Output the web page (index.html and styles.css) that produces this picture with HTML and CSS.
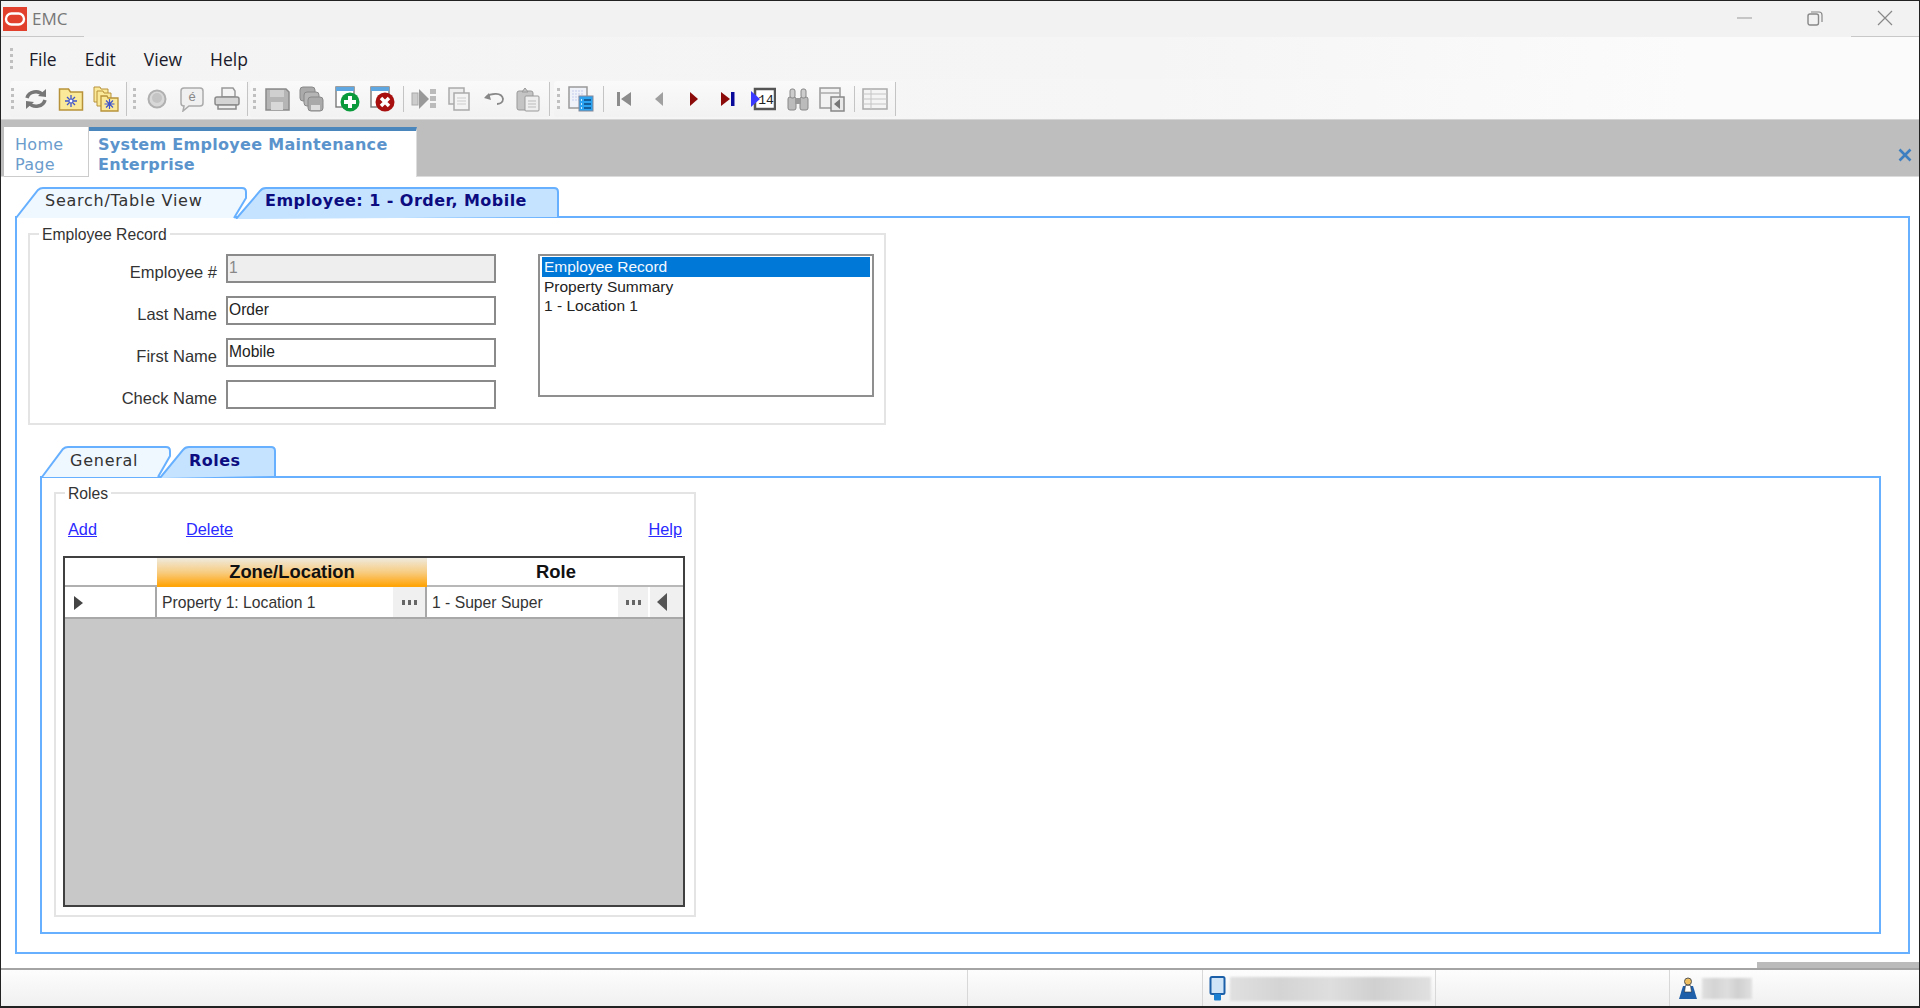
FILE: index.html
```html
<!DOCTYPE html>
<html lang="en">
<head>
<meta charset="utf-8">
<title>EMC</title>
<link rel="stylesheet" href="styles.css">
</head>
<body>
<div class="win">
  <header class="titlebar">
    <svg class="logo" viewBox="0 0 24 24" width="24" height="24"><rect width="24" height="24" fill="#e0402c"/><rect x="3" y="6.5" width="18" height="11" rx="5.5" fill="none" stroke="#fff" stroke-width="2.4"/></svg>
    <span class="apptitle">EMC</span>
    <div class="winctl">
      <svg width="16" height="16" viewBox="0 0 16 16"><path d="M0 8h15" stroke="#999" fill="none"/></svg>
      <svg width="16" height="16" viewBox="0 0 16 16"><rect x="1" y="4" width="10.500" height="11" rx="2" fill="none" stroke="#888" stroke-width="1.400"/><path d="M4 2h8a3 3 0 0 1 3 3v7" fill="none" stroke="#888" stroke-width="1.200"/></svg>
      <svg width="16" height="16" viewBox="0 0 16 16"><path d="M1 1l14 14M15 1L1 15" stroke="#888" stroke-width="1.200" fill="none"/></svg>
    </div>
  </header>

  <nav class="menubar">
    <i class="grip"></i>
    <span class="menu">File</span><span class="menu">Edit</span><span class="menu">View</span><span class="menu">Help</span>
  </nav>

  <div class="toolbar">
    <div class="tgroup first">
      <i class="grip"></i>
      <span class="slot"><svg viewBox="0 0 26 26" width="26" height="26"><path d="M4 12a9 8 0 0 1 16-3" fill="none" stroke="#777" stroke-width="3.500"/><path d="M15 10l8 1 0-8z" fill="#777"/><path d="M22 14a9 8 0 0 1-16 3" fill="none" stroke="#777" stroke-width="3.500"/><path d="M11 16l-8-1 0 8z" fill="#777"/></svg></span>
      <span class="slot"><svg viewBox="0 0 26 26" width="26" height="26"><path d="M1.500 24V3h9l2 3h12v18z" fill="#fbe99a" stroke="#b8923a" stroke-width="1.500"/><path d="M13 9v12M7 15h12M9 11l8 8M17 11l-8 8" stroke="#3f55cc" stroke-width="1.300"/><circle cx="13" cy="15" r="2" fill="#fff" stroke="#3f55cc"/></svg></span>
      <span class="slot"><svg viewBox="0 0 26 26" width="26" height="26"><path d="M1 16V1h6l1 2h7v13z" fill="#fbe99a" stroke="#b8923a"/><path d="M4 20V5h6l1 2h7v13z" fill="#fbe99a" stroke="#b8923a"/><path d="M8 25V10h6l1 2h10v13z" fill="#fbe99a" stroke="#b8923a" stroke-width="1.300"/><path d="M16.500 13v10M11.500 18h10M13 14.500l7 7M20 14.500l-7 7" stroke="#3f55cc" stroke-width="1.200"/></svg></span>
      <i class="sep"></i>
    </div>
    <div class="tgroup second">
      <i class="grip"></i>
      <span class="slot"><svg viewBox="0 0 26 26" width="26" height="26"><circle cx="13" cy="13" r="8.500" fill="#d8d8d8" stroke="#b0b0b0" stroke-width="2"/><circle cx="13" cy="12" r="5" fill="#c4c4c4"/></svg></span>
      <span class="slot"><svg viewBox="0 0 26 26" width="26" height="26"><path d="M5 2h16a3 3 0 0 1 3 3v12a3 3 0 0 1-3 3H10l-6 5 1-5a3 3 0 0 1-3-3V5a3 3 0 0 1 3-3z" fill="#f0f0f0" stroke="#aaa" stroke-width="1.500"/><text x="13" y="15" class="tiny">é</text></svg></span>
      <span class="slot"><svg viewBox="0 0 26 26" width="26" height="26"><path d="M8 11V2h11l2 3v6z" fill="#f4f4f4" stroke="#999" stroke-width="1.500"/><rect x="1" y="11" width="24" height="8" rx="2" fill="#d4d4d4" stroke="#8a8a8a" stroke-width="1.500"/><rect x="4" y="19" width="18" height="4" fill="#eee" stroke="#8a8a8a" stroke-width="1.500"/></svg></span>
      <i class="sep"></i>
    </div>
    <div class="tgroup">
      <i class="grip"></i>
      <span class="slot"><svg viewBox="0 0 26 26" width="26" height="26"><path d="M2 3h20l3 3v18H2z" fill="#b5b5b5" stroke="#8a8a8a" stroke-width="1.500"/><rect x="6" y="4" width="14" height="7" fill="#cfcfcf"/><rect x="7" y="16" width="12" height="8" fill="#d8d8d8"/></svg></span>
      <span class="slot"><svg viewBox="0 0 26 26" width="26" height="26"><rect x="1" y="1" width="15" height="14" rx="3" fill="#aaa" stroke="#888"/><rect x="5" y="6" width="15" height="14" rx="3" fill="#b5b5b5" stroke="#888"/><rect x="9" y="11" width="15" height="14" rx="3" fill="#aaa" stroke="#888"/><rect x="12" y="19" width="9" height="5" fill="#ddd"/></svg></span>
      <span class="slot"><svg viewBox="0 0 26 26" width="26" height="26"><rect x="2" y="1" width="18" height="20" fill="#fff" stroke="#7a7a7a" stroke-width="1.400"/><rect x="2" y="1" width="18" height="4" fill="#5fa7e0"/><circle cx="16" cy="16" r="9.500" fill="#0a9a3c"/><path d="M16 10v12M10 16h12" stroke="#fff" stroke-width="4"/></svg></span>
      <span class="slot"><svg viewBox="0 0 26 26" width="26" height="26"><rect x="2" y="1" width="18" height="20" fill="#fff" stroke="#7a7a7a" stroke-width="1.400"/><rect x="2" y="1" width="18" height="4" fill="#5fa7e0"/><circle cx="16" cy="16" r="9.500" fill="#a81010"/><path d="M12 12l8 8M20 12l-8 8" stroke="#fff" stroke-width="3.500"/></svg></span>
      <i class="sep short"></i>
      <span class="slot"><svg viewBox="0 0 26 26" width="26" height="26"><rect x="1" y="7" width="6" height="12" fill="#ccc" stroke="#aaa"/><path d="M8 3l10 10-10 10z" fill="#999"/><rect x="19" y="3" width="6" height="5" fill="#bbb"/><rect x="19" y="10" width="6" height="5" fill="#bbb"/><rect x="19" y="17" width="6" height="5" fill="#bbb"/></svg></span>
      <span class="slot"><svg viewBox="0 0 26 26" width="26" height="26"><rect x="3" y="2" width="15" height="16" fill="#eee" stroke="#aaa" stroke-width="1.500"/><rect x="8" y="7" width="15" height="17" fill="#f4f4f4" stroke="#aaa" stroke-width="1.500"/><path d="M11 12h9M11 15h9M11 18h9" stroke="#ccc"/></svg></span>
      <span class="slot"><svg viewBox="0 0 26 26" width="26" height="26"><path d="M8 7l-5 5 7 2z" fill="#888"/><path d="M5 11c5-4 16-5 17 2 0 4-4 5-6 5" fill="none" stroke="#888" stroke-width="1.800"/></svg></span>
      <span class="slot"><svg viewBox="0 0 26 26" width="26" height="26"><rect x="2" y="5" width="16" height="19" rx="2" fill="#c4c4c4" stroke="#999"/><path d="M7 6l3-4 3 4z" fill="#c4c4c4" stroke="#999"/><rect x="10" y="10" width="14" height="15" rx="1" fill="#eee" stroke="#999"/><path d="M13 15h8M13 18h8M13 21h8" stroke="#bbb"/></svg></span>
      <i class="sep"></i>
    </div>
    <div class="tgroup">
      <i class="grip"></i>
      <span class="slot"><svg viewBox="0 0 26 26" width="26" height="26"><rect x="1" y="1" width="18" height="21" fill="#f0f2fa" stroke="#999" stroke-width="1.500"/><path d="M4 5h12M4 8h12M4 11h12M4 14h12" stroke="#c4ccec" stroke-dasharray="2 1"/><rect x="11" y="10" width="14" height="15" fill="#2ba3f0" stroke="#889"/><path d="M16 14h7M16 18h7M16 22h7" stroke="#0a4a80" stroke-width="1.500"/><path d="M13 14h1M13 18h1M13 22h1" stroke="#fff" stroke-width="1.500"/></svg></span>
      <i class="sep short"></i>
      <span class="slot"><svg viewBox="0 0 26 26" width="26" height="26"><path d="M6 6h3v14H6zM20 6v14l-10-7z" fill="#8c8c8c"/></svg></span>
      <span class="slot"><svg viewBox="0 0 26 26" width="26" height="26"><path d="M17 6v14l-8-7z" fill="#a0a0a0"/></svg></span>
      <span class="slot"><svg viewBox="0 0 26 26" width="26" height="26"><path d="M9 6v14l8-7z" fill="#8b0a0a"/></svg></span>
      <span class="slot"><svg viewBox="0 0 26 26" width="26" height="26"><path d="M6 6v14l9-7z" fill="#8b0a0a"/><path d="M16 6h3.500v14H16z" fill="#0a0a9a"/></svg></span>
      <span class="slot"><svg viewBox="0 0 26 26" width="26" height="26"><rect x="5" y="3" width="20" height="20" fill="#fff" stroke="#555" stroke-width="2.500"/><text x="16" y="18" class="cal">14</text><path d="M1 5l9 8-9 8z" fill="#3a3aff"/></svg></span>
      <span class="slot"><svg viewBox="0 0 26 26" width="26" height="26"><rect x="3" y="11" width="8" height="13" rx="2" fill="#bbb" stroke="#888"/><rect x="15" y="11" width="8" height="13" rx="2" fill="#bbb" stroke="#888"/><rect x="5" y="3" width="5" height="9" rx="2" fill="#ccc" stroke="#888"/><rect x="16" y="3" width="5" height="9" rx="2" fill="#ccc" stroke="#888"/><rect x="10" y="12" width="6" height="6" fill="#999"/></svg></span>
      <span class="slot"><svg viewBox="0 0 26 26" width="26" height="26"><rect x="1" y="2" width="20" height="20" fill="#f2f2f2" stroke="#999" stroke-width="1.500"/><path d="M1 7h20" stroke="#aaa" stroke-width="1.500"/><rect x="12" y="11" width="13" height="14" fill="#e8e8e8" stroke="#888" stroke-width="1.500"/><path d="M21 13v10l-6-5z" fill="#777"/></svg></span>
      <i class="sep short"></i>
      <span class="slot"><svg viewBox="0 0 26 26" width="26" height="26"><rect x="1" y="3" width="24" height="20" fill="#f4f4f4" stroke="#aaa" stroke-width="1.500"/><path d="M1 8h24M1 13h24M1 18h24M9 3v20" stroke="#c4c4c4"/></svg></span>
      <i class="sep"></i>
    </div>
  </div>

  <div class="docstrip">
    <div class="doctab home">Home<br>Page</div>
    <div class="doctab current">System Employee Maintenance<br>Enterprise</div>
    <svg class="docclose" width="14" height="14" viewBox="0 0 14 14"><path d="M1.500 1.500l11 11M12.500 1.500l-11 11" stroke="#3d7fc0" stroke-width="2.600" fill="none"/></svg>
  </div>

  <main class="content">
    <div class="tabs outer">
      <div class="tab t-search">
        <svg class="tabshape" width="232" height="32" viewBox="0 0 232 32"><path d="M1 31L23 3Q25 1 28 1H227Q231 1 231 5V11L219 31" fill="#eff7ff" stroke="#66b0ff" stroke-width="2"/></svg>
        <span class="tablabel">Search/Table View</span>
      </div>
      <div class="tab t-emp active">
        <svg class="tabshape" width="324" height="32" viewBox="0 0 324 32"><path d="M1 32L25 4Q27 1 31 1H319Q323 1 323 5V30" fill="#c5e3ff" stroke="#66b0ff" stroke-width="2"/></svg>
        <span class="tablabel">Employee: 1 - Order, Mobile</span>
      </div>
    </div>
    <section class="panel outerpanel">
      <div class="group record">
        <span class="legend">Employee Record</span>
        <div class="form">
          <span class="lab">Employee #</span><div class="field off">1</div>
          <span class="lab">Last Name</span><div class="field">Order</div>
          <span class="lab">First Name</span><div class="field">Mobile</div>
          <span class="lab">Check Name</span><div class="field"></div>
        </div>
        <div class="listbox">
          <div class="opt sel">Employee Record</div>
          <div class="opt">Property Summary</div>
          <div class="opt">1 - Location 1</div>
        </div>
      </div>

      <div class="tabs inner">
        <div class="tab t-gen">
          <svg class="tabshape" width="130" height="32" viewBox="0 0 130 32"><path d="M1 31L22 3Q24 1 27 1H125Q129 1 129 5V10L117 31" fill="#eff7ff" stroke="#66b0ff" stroke-width="2"/></svg>
          <span class="tablabel">General</span>
        </div>
        <div class="tab t-roles active">
          <svg class="tabshape" width="117" height="32" viewBox="0 0 117 32"><path d="M1 32L24 4Q26 1 30 1H112Q116 1 116 5V30" fill="#c5e3ff" stroke="#66b0ff" stroke-width="2"/></svg>
          <span class="tablabel">Roles</span>
        </div>
      </div>
      <section class="panel innerpanel">
        <div class="group roles">
          <span class="legend">Roles</span>
          <div class="links">
            <a class="lnk add" href="#">Add</a>
            <a class="lnk del" href="#">Delete</a>
            <a class="lnk help" href="#">Help</a>
          </div>
          <div class="grid">
            <div class="hd corner"></div>
            <div class="hd sorted">Zone/Location</div>
            <div class="hd role">Role</div>
            <div class="rowhead"><svg width="9" height="14" viewBox="0 0 9 14"><path d="M0 0l9 7-9 7z" fill="#444"/></svg></div>
            <div class="cell"><span class="celltext">Property 1: Location 1</span><span class="dots"><svg width="15" height="5" viewBox="0 0 15 5"><path d="M0 0h3v5H0zM6 0h3v5H6zM12 0h3v5h-3z" fill="#666"/></svg></span></div>
            <div class="cell"><span class="celltext">1 - Super Super</span><span class="dots d2"><svg width="15" height="5" viewBox="0 0 15 5"><path d="M0 0h3v5H0zM6 0h3v5H6zM12 0h3v5h-3z" fill="#666"/></svg></span><span class="back"><svg width="12" height="18" viewBox="0 0 12 18"><path d="M11 0v18L1 9z" fill="#555"/></svg></span></div>
          </div>
        </div>
      </section>
    </section>
    <div class="hscroll"></div>
  </main>

  <footer class="status">
    <div class="scell s1"></div>
    <div class="scell s2"></div>
    <div class="scell s3">
      <svg width="17" height="25" viewBox="0 0 17 25"><rect x="1.500" y="1" width="14" height="17" rx="1.500" fill="#cfe4f7" stroke="#1a5fa8" stroke-width="2"/><rect x="5" y="18" width="7" height="6.500" rx="1" fill="#1a7fd0"/></svg>
      <span class="blur wide"></span>
    </div>
    <div class="scell s4"></div>
    <div class="scell s5">
      <svg width="20" height="23" viewBox="0 0 20 23"><circle cx="10" cy="4.500" r="3.500" fill="#f0c060" stroke="#555"/><path d="M5 9h10l4 13H1z" fill="#1f5ea8"/><path d="M7.500 8.500h5l1 6.500H6.500z" fill="#fff" stroke="#333" stroke-width=".6"/></svg>
      <span class="blur narrow"></span>
    </div>
  </footer>
</div>
</body>
</html>
```

FILE: styles.css
```css
* { box-sizing: border-box; }
html, body { margin: 0; padding: 0; height: 100%; overflow: hidden; }
body { font-family: "Liberation Sans", Arial, sans-serif; font-size: 16px; color: #222; background: #fff; }

.win { height: 1008px; display: flex; flex-direction: column; border: 1px solid #222; border-bottom-width: 2px; background: #fff; }

/* title bar */
.titlebar {
  height: 36px; flex: none; display: flex; align-items: center; padding: 0 0 1px 2px;
  background:
    linear-gradient(#c8c8c8, #c8c8c8) left bottom / 83px 1px no-repeat,
    linear-gradient(#c8c8c8, #c8c8c8) right bottom / 68px 1px no-repeat,
    #f2f2f2;
}
.logo { flex: none; }
.apptitle { margin-left: 5px; font-family: "Open Sans", sans-serif; font-size: 17px; color: #777; }
.winctl { margin-left: auto; display: flex; gap: 54px; padding: 0 26px 2px 0; align-items: center; }

/* menu */
.menubar {
  height: 42px; flex: none; display: flex; align-items: center; padding: 1px 0 0 9px;
  background: linear-gradient(90deg, #f4f4f4, #f5f5f5 60%, #fbfbfb 88%);
}
.grip { display: block; width: 3px; height: 22px; flex: none; background: repeating-linear-gradient(#c0c0c0 0 3px, transparent 3px 6px); }
.menu { font-family: "Open Sans", sans-serif; font-size: 17.5px; color: #1a1a2a; margin-right: 28px; }
.menubar .grip + .menu { margin-left: 16px; }

/* toolbar */
.toolbar {
  height: 40px; flex: none; display: flex; align-items: center; padding-left: 9px;
  background: linear-gradient(90deg, #f4f4f4, #f6f6f6 60%, #fbfbfb 88%);
}
.tgroup { display: flex; align-items: center; height: 36px; padding-left: 1px; background: linear-gradient(#fafafa, #f2f2f2); border-radius: 3px; margin-right: 4.5px; }
.tgroup .grip { margin-right: 4px; }
.tgroup.first { margin-right: 3px; }
.tgroup.second { margin-right: 2px; }
.tgroup.first .grip { margin-right: 5px; }
.tgroup:not(.first) .grip { margin-left: 2px; margin-right: 4px; }
.slot { width: 34.7px; height: 28px; display: flex; align-items: center; justify-content: center; flex: none; }
.sep { display: block; width: 1px; height: 34px; background: #c4c4c4; margin-left: 3px; }
.sep.short { height: 26px; margin: 0 3px 0 4px; }
.tiny { font: 13px "Liberation Sans", sans-serif; fill: #888; text-anchor: middle; }
.cal { font: 13px "Liberation Mono", monospace; fill: #222; text-anchor: middle; }

/* document tabs */
.docstrip {
  height: 58px; flex: none; position: relative; display: flex; align-items: flex-end; padding-left: 3px;
  background: #bebebe; border-top: 1px solid #d4d4d4; border-bottom: 1px solid #dcdcdc;
  font-family: "DejaVu Sans", sans-serif; font-size: 16px; line-height: 20px;
}
.doctab { height: 50px; margin-bottom: -1px; background: #fff; flex: none; }
.doctab.home { width: 85px; padding: 8px 0 0 11px; color: #6b9ccc; border-right: 1px solid #ccc; border-bottom: 1px solid #ccc; letter-spacing: .3px; }
.doctab.current { width: 328px; padding: 4px 0 0 9px; border-top: 4px solid #4a86bb; color: #5b94cc; font-weight: bold; border-right: 1px solid #ddd; letter-spacing: .3px; }
.docclose { position: absolute; right: 7px; top: 28px; }

/* content */
.content { flex: 1; min-height: 0; position: relative; display: flex; flex-direction: column; padding: 10px 9px 14px 14px; }
.hscroll { position: absolute; right: 0; bottom: 0; width: 162px; height: 6px; background: #bbb; }

.tabs { display: flex; height: 31px; flex: none; position: relative; z-index: 1; margin-bottom: -2px; font-family: "DejaVu Sans", sans-serif; font-size: 16px; color: #333; letter-spacing: .75px; }
.tab { position: relative; height: 31px; flex: none; display: flex; align-items: center; padding-bottom: 4px; }
.tabshape { position: absolute; left: 0; top: 0; }
.tablabel { position: relative; white-space: nowrap; }
.tab.active .tablabel { font-weight: bold; color: #0c0c80; letter-spacing: .45px; }
.t-search { width: 232px; padding-left: 30px; }
.t-emp { width: 324px; margin-left: -12px; padding-left: 30px; }
.t-gen { width: 130px; padding-left: 29px; }
.t-roles { width: 117px; margin-left: -12px; padding-left: 30px; }
.inner .tab { padding-bottom: 3px; }
.inner { margin: 21px 0 -1px 13px; }

.panel { border: 2px solid #66b0ff; display: flex; flex-direction: column; min-height: 0; }
.outerpanel { flex: 1; padding: 15px 27px 18px 11px; }
.innerpanel { flex: 1; margin-left: 12px; padding: 14px 0 15px 12px; }

/* group boxes */
.group { position: relative; border: 2px solid #e4e4e4; flex: none; }
.legend { position: absolute; left: 9px; top: -9px; background: #fff; padding: 0 3px; line-height: 18px; font-size: 15.7px; color: #333; }
.record { width: 858px; height: 192px; display: flex; padding-top: 19px; }
.form { width: 466px; display: grid; grid-template-columns: 188px 270px; column-gap: 8px; grid-auto-rows: 29px; row-gap: 13px; align-content: start; flex: none; }
.lab { text-align: right; padding: 9px 1px 0 0; line-height: 18px; font-size: 16.5px; color: #333; }
.field { border: 2px solid #8a8a8a; background: #fff; padding: 3px 0 0 1px; line-height: 18px; font-size: 15.6px; color: #222; }
.field.off { background: #eee; color: #888; }
.listbox { margin-left: 42px; width: 336px; height: 143px; border: 2px solid #8f8f8f; padding: 1px 2px; background: #fff; }
.opt { height: 19.6px; line-height: 19.6px; padding-left: 2px; font-size: 15.5px; color: #222; }
.opt.sel { background: #0078d7; color: #f4f8ff; }

.roles { width: 642px; height: 425px; padding: 25px 9px 8px 7px; display: flex; flex-direction: column; }
.links { display: flex; height: 20px; line-height: 20px; flex: none; font-size: 16.3px; }
.lnk { color: #2a2aff; text-decoration: underline; }
.add { margin-left: 5px; }
.del { margin-left: 89px; }
.help { margin-left: auto; margin-right: 3px; }

/* data grid */
.grid { margin-top: 17px; flex: 1; border: 2px solid #404040; background: #c8c8c8; display: grid; grid-template-columns: 92px 270px 1fr; grid-template-rows: 29px 32px; align-content: start; }
.hd { background: #fff; display: flex; align-items: center; justify-content: center; padding-bottom: 2px; font-weight: bold; font-size: 18.4px; color: #111; }
.hd.corner { box-shadow: inset 0 -2px 0 #b0b0b0, inset 0 2px 0 #fff; }
.hd.sorted { background: linear-gradient(#efeade, #f8cc80 50%, #ffa50a 95%); }
.hd.role { box-shadow: inset 0 -2px 0 #b8b8b8; padding-left: 2px; }
.rowhead { background: #fff; border-bottom: 2px solid #a8a8a8; border-right: 2px solid #a8a8a8; display: flex; align-items: center; padding: 2px 0 0 9px; }
.cell { background: #fff; border-bottom: 2px solid #a8a8a8; display: flex; align-items: stretch; }
.cell:nth-child(5) { border-right: 2px solid #a8a8a8; }
.celltext { flex: 1; padding-left: 5px; line-height: 32px; font-size: 15.7px; color: #333; white-space: nowrap; }
.dots { width: 32px; background: #f0f0f0; display: flex; align-items: center; justify-content: center; }
.d2 { width: 30px; }
.back { width: 33px; margin-left: 2px; padding-right: 9px; background: #f0f0f0; display: flex; align-items: center; justify-content: center; }

/* status bar */
.status { height: 38px; flex: none; display: flex; border-top: 2px solid #a4a4a4; background: linear-gradient(#fdfdfd, #f0f0f0); }
.scell { border-right: 1px solid #d8d8d8; height: 100%; display: flex; align-items: center; flex: none; padding-top: 1px; }
.s1 { width: 967px; }
.s2 { width: 235px; }
.s3 { width: 233px; padding-left: 6px; gap: 4px; }
.s4 { width: 234px; }
.s5 { flex: 1; border-right: 0; padding-left: 8px; gap: 4px; }
.blur { display: block; filter: blur(1px); background: linear-gradient(90deg, #e0e0e0, #d4d4d4 25%, #dedede 50%, #d0d0d0 72%, #e0e0e0); }
.wide { width: 201px; height: 24px; }
.narrow { width: 50px; height: 21px; }
```
